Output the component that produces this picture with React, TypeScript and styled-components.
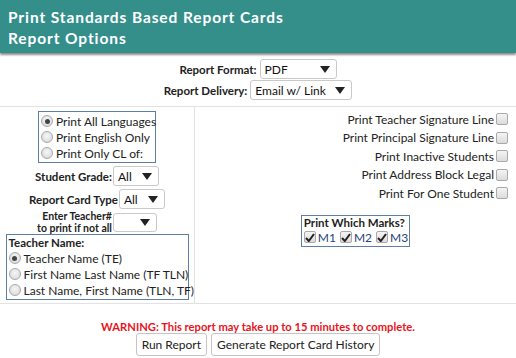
import React from "react";
import styled, { createGlobalStyle } from "styled-components";

const Global = createGlobalStyle`
  html, body { margin: 0; padding: 0; background: #fff; }
  body { font-family: Lato, "Liberation Sans", sans-serif; color: #222; font-size: 12px; }
  * { box-sizing: border-box; }
`;

const Page = styled.div`
  width: 516px;
  height: 358px;
  overflow: hidden;
  display: flex;
  flex-direction: column;
`;

const Header = styled.div`
  background: #348f8b;
  color: #fff;
  height: 53px;
  padding: 7px 8px 0;
  box-shadow: 0 2px 2px rgba(0, 0, 0, 0.45);
  font-weight: bold;
  font-size: 15.5px;
  letter-spacing: 0.9px;
  line-height: 21px;
`;

const TopOptions = styled.div`
  display: flex;
  flex-direction: column;
  align-items: center;
  gap: 1px;
  padding: 6px 0 6px;
`;

const Row = styled.div`
  display: flex;
  align-items: center;
  gap: 3px;
`;

const Label = styled.span`
  font-weight: bold;
  font-size: 11.5px;
  text-align: right;
  white-space: nowrap;
`;

const SelectBox = styled.div<{ $w: number; $h?: number }>`
  width: ${(p) => p.$w}px;
  height: ${(p) => p.$h ?? 20}px;
  border: 1px solid #c9c9c9;
  border-radius: 3px;
  display: flex;
  align-items: center;
  justify-content: space-between;
  padding: 0 6px 0 4px;
  background: #fff;
  font-size: 12px;
  color: #111;
`;

const Caret = () => (
  <svg width="10" height="7" viewBox="0 0 10 7">
    <path d="M0 0 H10 L5 7 Z" fill="#222" />
  </svg>
);

const Select = ({ value, w, h }: { value: string; w: number; h?: number }) => (
  <SelectBox $w={w} $h={h}>
    <span>{value}</span>
    <Caret />
  </SelectBox>
);

const Main = styled.div`
  display: grid;
  grid-template-columns: 195px 1fr;
  border-top: 1px solid #e2e2e2;
  border-bottom: 1px solid #e2e2e2;
  height: 198px;
`;

const LeftCol = styled.div`
  border-right: 1px solid #e2e2e2;
  display: flex;
  flex-direction: column;
  align-items: center;
  padding-top: 4px;
`;

const RightCol = styled.div`
  display: flex;
  flex-direction: column;
  align-items: flex-end;
  padding: 3px 8px 0 0;
`;

const GroupBox = styled.div<{ $w: number; $mt?: number }>`
  width: ${(p) => p.$w}px;
  margin-top: ${(p) => p.$mt ?? 0}px;
  border: 1px solid #5d7ea6;
  padding: 1px 2px 1px 2px;
  display: flex;
  flex-direction: column;
`;

const RadioRow = styled.label`
  display: flex;
  align-items: center;
  gap: 3px;
  height: 16px;
  white-space: nowrap;
`;

const RadioDot = styled.span<{ $on?: boolean }>`
  width: 12px;
  height: 12px;
  border-radius: 50%;
  border: 1px solid #a8a8a8;
  background: radial-gradient(circle at 50% 40%, #f6f6f6, #d6d6d6);
  display: inline-flex;
  align-items: center;
  justify-content: center;
  flex: none;
  &::after {
    content: "";
    width: 5px;
    height: 5px;
    border-radius: 50%;
    background: ${(p) => (p.$on ? "#444" : "transparent")};
  }
`;

const Radio = ({ on, children }: { on?: boolean; children: React.ReactNode }) => (
  <RadioRow>
    <RadioDot $on={on} />
    <span>{children}</span>
  </RadioRow>
);

const FieldRow = styled.div<{ $mt?: number }>`
  display: flex;
  align-items: center;
  gap: 1px;
  margin-top: ${(p) => p.$mt ?? 3}px;
`;

const TwoLineLabel = styled.span`
  display: flex;
  flex-direction: column;
  align-items: flex-end;
  font-weight: bold;
  font-size: 10.5px;
  white-space: nowrap;
`;

const LabelLine = styled.span`
  display: block;
  height: 12px;
  line-height: 12px;
`;

const CheckRow = styled.label`
  display: flex;
  align-items: center;
  gap: 2px;
  height: 18.5px;
  white-space: nowrap;
`;

const CheckSquare = styled.span`
  width: 12px;
  height: 12px;
  border: 1px solid #a9a9a9;
  border-radius: 2px;
  background: linear-gradient(#f4f4f4, #dcdcdc);
  display: inline-flex;
  align-items: center;
  justify-content: center;
  flex: none;
`;

const Check = ({ on }: { on?: boolean }) => (
  <CheckSquare>
    {on && (
      <svg width="10" height="9" viewBox="0 0 10 9">
        <path d="M1 5 L3.8 8 L9 1" fill="none" stroke="#222" strokeWidth="2" />
      </svg>
    )}
  </CheckSquare>
);

const MarksBox = styled.div`
  align-self: center;
  margin-top: 12px;
  margin-right: -8px;
  border: 1px solid #5d7ea6;
  padding: 0 1px 1px 2px;
`;

const BoxTitle = styled.div`
  font-weight: bold;
  font-size: 11.5px;
  line-height: 14px;
`;

const MarksRow = styled.div`
  display: flex;
  gap: 4px;
  align-items: center;
`;

const Mark = styled.span`
  display: flex;
  align-items: center;
  gap: 2px;
  color: #1f3f7a;
`;

const Footer = styled.div`
  display: flex;
  flex-direction: column;
  align-items: center;
  padding-top: 16px;
`;

const Warning = styled.div`
  color: #e8131c;
  font-weight: bold;
  font-size: 11.2px;
  line-height: 13px;
`;

const Buttons = styled.div`
  display: flex;
  gap: 4px;
`;

const Button = styled.button`
  font-family: inherit;
  font-size: 12px;
  color: #222;
  background: #fff;
  border: 1px solid #c4c4c4;
  border-radius: 3px;
  height: 23px;
  padding: 0 5px;
`;

export default function App() {
  return (
    <Page>
      <Global />
      <Header>
        <div>Print Standards Based Report Cards</div>
        <div>Report Options</div>
      </Header>
      <TopOptions>
        <Row>
          <Label>Report Format:</Label>
          <Select value="PDF" w={77} />
        </Row>
        <Row>
          <Label>Report Delivery:</Label>
          <Select value="Email w/ Link" w={102} />
        </Row>
      </TopOptions>
      <Main>
        <LeftCol>
          <GroupBox $w={118}>
            <Radio on>Print All Languages</Radio>
            <Radio>Print English Only</Radio>
            <Radio>Print Only CL of:</Radio>
          </GroupBox>
          <FieldRow>
            <Label>Student Grade:</Label>
            <Select value="All" w={46} />
          </FieldRow>
          <FieldRow>
            <Label>Report Card Type</Label>
            <Select value="All" w={46} />
          </FieldRow>
          <FieldRow $mt={1}>
            <TwoLineLabel>
              <LabelLine>Enter Teacher#</LabelLine>
              <LabelLine>to print if not all</LabelLine>
            </TwoLineLabel>
            <Select value="" w={44} h={19} />
          </FieldRow>
          <GroupBox $w={183} $mt={0}>
            <BoxTitle>Teacher Name:</BoxTitle>
            <Radio on>Teacher Name (TE)</Radio>
            <Radio>First Name Last Name (TF TLN)</Radio>
            <Radio>Last Name, First Name (TLN, TF)</Radio>
          </GroupBox>
        </LeftCol>
        <RightCol>
          <CheckRow>Print Teacher Signature Line<Check /></CheckRow>
          <CheckRow>Print Principal Signature Line<Check /></CheckRow>
          <CheckRow>Print Inactive Students<Check /></CheckRow>
          <CheckRow>Print Address Block Legal<Check /></CheckRow>
          <CheckRow>Print For One Student<Check /></CheckRow>
          <MarksBox>
            <BoxTitle>Print Which Marks?</BoxTitle>
            <MarksRow>
              <Mark><Check on />M1</Mark>
              <Mark><Check on />M2</Mark>
              <Mark><Check on />M3</Mark>
            </MarksRow>
          </MarksBox>
        </RightCol>
      </Main>
      <Footer>
        <Warning>WARNING: This report may take up to 15 minutes to complete.</Warning>
        <Buttons>
          <Button>Run Report</Button>
          <Button>Generate Report Card History</Button>
        </Buttons>
      </Footer>
    </Page>
  );
}
